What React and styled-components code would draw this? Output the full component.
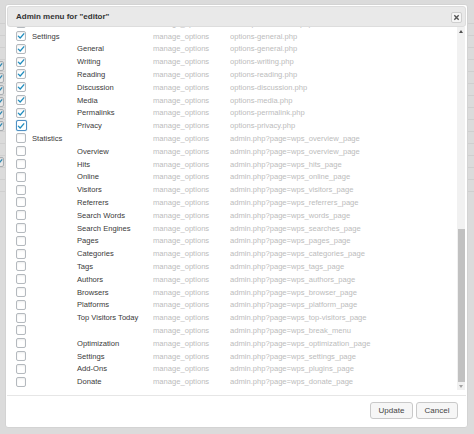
import React, { useLayoutEffect, useRef, useState } from 'react'
import styled, { createGlobalStyle, css } from 'styled-components'

const GlobalStyle = createGlobalStyle`
    html, body {
        margin: 0;
        padding: 0;
        height: 100%;
        background: #f1f1f1;
        font-family: "Liberation Sans", Arial, sans-serif;
        overflow: hidden;
    }
`

const Page = styled.div`
    position: relative;
    width: 474px;
    height: 434px;
    overflow: hidden;
    background: #f1f1f1;
`

const BackList = styled.div`
    display: flex;
    flex-direction: column;
    margin-left: -6px;
    padding-top: 12px;
`

const BackRow = styled.div`
    height: 11px;
    border-bottom: 1px solid #e2e2e2;
    display: flex;
    align-items: center;
`

const Overlay = styled.div`
    position: absolute;
    inset: 0;
    background: rgba(120, 120, 120, 0.18);
`

const Dialog = styled.div`
    position: absolute;
    top: 4px;
    left: 5px;
    width: 463px;
    height: 424px;
    box-sizing: border-box;
    border: 1px solid #d3d3d3;
    border-radius: 3px;
    padding: 1px;
    background: #fff;
    display: flex;
    flex-direction: column;
`

const TitleBar = styled.div`
    height: 21px;
    box-sizing: border-box;
    background: #e9e9e9;
    border: 1px solid #dddddd;
    border-radius: 3px;
    display: flex;
    align-items: center;
    justify-content: space-between;
    padding: 0 3px 0 8px;
`

const Title = styled.span`
    font-size: 8px;
    font-weight: bold;
    color: #333;
`

const CloseButton = styled.button`
    width: 11px;
    height: 11px;
    padding: 0;
    margin-top: 1px;
    box-sizing: border-box;
    border: 1px solid #cfcfcf;
    border-radius: 2px;
    background: #f6f6f6;
    display: flex;
    align-items: center;
    justify-content: center;
`

const Body = styled.div`
    height: 363px;
    margin: 0 1px;
    display: flex;
`

const List = styled.div`
    flex: 1;
    overflow: hidden;
    padding: 1px 0 2px;
    box-sizing: border-box;
`

const ScrollBar = styled.div`
    width: 8px;
    background: #f1f1f1;
    display: flex;
    flex-direction: column;
`

const ScrollArrow = styled.div`
    height: 8px;
    display: flex;
    align-items: center;
    justify-content: center;
`

const ScrollTrack = styled.div`
    flex: 1;
    display: flex;
    flex-direction: column;
`

const ScrollThumb = styled.div`
    margin-left: 1px;
    width: 7px;
    background: #c1c1c1;
`

const Row = styled.div`
    height: 12.8px;
    display: grid;
    grid-template-columns: 16px 121px 77px 1fr;
    align-items: center;
    padding-left: 8px;
    font-size: 7.6px;
    white-space: nowrap;
`

const Label = styled.span`
    color: #3a3a3a;
    padding-left: ${p => (p.$level === 2 ? 45 : 0)}px;
`

const Muted = styled.span`
    color: #bcbcbc;
    overflow: hidden;
`

const Box = styled.span`
    width: 10px;
    height: 10px;
    box-sizing: border-box;
    border: 1px solid #b4b9be;
    border-radius: 2px;
    background: #fff;
    box-shadow: inset 0 1px 2px rgba(0, 0, 0, 0.08);
    display: flex;
    align-items: center;
    justify-content: center;

    ${p => p.$focus && css`
        width: 11px;
        height: 11px;
        margin-left: -0.5px;
        border-color: #4f8fc4;
        box-shadow: 0 0 1px rgba(30, 140, 190, 0.8);
    `}
`

const Footer = styled.div`
    margin-top: 5px;
    border-top: 1px solid #e6e6e6;
    padding: 6px 8px 0 0;
    display: flex;
    justify-content: flex-end;
    gap: 3px;
`

const Button = styled.button`
    height: 17px;
    box-sizing: border-box;
    padding: 0 7px;
    border: 1px solid #c9c9c9;
    border-radius: 3px;
    background: #f6f6f6;
    color: #454545;
    font-family: "Liberation Sans", Arial, sans-serif;
    font-size: 8px;
    min-width: ${p => p.$min || 0}px;
`

const Check = ({ color = '#1e8cbe' }) => (
    <svg width="8" height="8" viewBox="0 0 8 8">
        <path d="M1.3 4.1 L3.2 6 L6.8 1.8" fill="none" stroke={color} strokeWidth="1.3" strokeLinecap="round" strokeLinejoin="round" />
    </svg>
)

const Checkbox = ({ checked, focus }) => (
    <Box $focus={focus}>{checked && <Check />}</Box>
)

const above = [
    ['Dashboard', 1, 'read', 'index.php'],
    ['Home', 2, 'read', 'index.php'],
    ['Updates', 2, 'update_core', 'update-core.php'],
    ['Posts', 1, 'edit_posts', 'edit.php'],
    ['All Posts', 2, 'edit_posts', 'edit.php'],
    ['Add New', 2, 'edit_posts', 'post-new.php'],
    ['Categories', 2, 'manage_categories', 'edit-tags.php?taxonomy=category'],
    ['Tags', 2, 'manage_categories', 'edit-tags.php?taxonomy=post_tag'],
    ['Media', 1, 'upload_files', 'upload.php'],
    ['Library', 2, 'upload_files', 'upload.php'],
    ['Add New', 2, 'upload_files', 'media-new.php'],
    ['Pages', 1, 'edit_pages', 'edit.php?post_type=page'],
    ['All Pages', 2, 'edit_pages', 'edit.php?post_type=page'],
    ['Add New', 2, 'edit_pages', 'post-new.php?post_type=page'],
    ['Comments', 1, 'edit_posts', 'edit-comments.php'],
    ['Appearance', 1, 'switch_themes', 'themes.php'],
    ['Themes', 2, 'switch_themes', 'themes.php'],
    ['Customize', 2, 'customize', 'customize.php'],
    ['Widgets', 2, 'edit_theme_options', 'widgets.php'],
    ['Menus', 2, 'edit_theme_options', 'nav-menus.php'],
    ['Theme Editor', 2, 'edit_themes', 'theme-editor.php'],
    ['Plugins', 1, 'activate_plugins', 'plugins.php'],
    ['Installed Plugins', 2, 'activate_plugins', 'plugins.php'],
    ['Add New', 2, 'install_plugins', 'plugin-install.php'],
    ['Plugin Editor', 2, 'edit_plugins', 'plugin-editor.php'],
    ['Users', 1, 'list_users', 'users.php'],
    ['All Users', 2, 'list_users', 'users.php'],
    ['Add New', 2, 'create_users', 'user-new.php'],
    ['Your Profile', 2, 'read', 'profile.php'],
    ['Tools', 1, 'edit_posts', 'tools.php'],
    ['Available Tools', 2, 'edit_posts', 'tools.php'],
    ['Import', 2, 'import', 'import.php'],
    ['Export', 2, 'export', 'export.php'],
    ['Site Health', 2, 'view_site_health_checks', 'site-health.php'],
    ['Export Personal Data', 2, 'export_others_personal_data', 'export-personal-data.php'],
    ['Erase Personal Data', 2, 'manage_options', 'erase-personal-data.php'],
].map(([label, level, cap, url]) => ({ label, level, cap, url, checked: true }))

const settings = [
    ['Settings', 1, 'options-general.php'],
    ['General', 2, 'options-general.php'],
    ['Writing', 2, 'options-writing.php'],
    ['Reading', 2, 'options-reading.php'],
    ['Discussion', 2, 'options-discussion.php'],
    ['Media', 2, 'options-media.php'],
    ['Permalinks', 2, 'options-permalink.php'],
    ['Privacy', 2, 'options-privacy.php'],
].map(([label, level, url]) => ({ label, level, cap: 'manage_options', url, checked: true, focus: label === 'Privacy' }))

const stats = [
    ['Statistics', 1, 'overview'],
    ['Overview', 2, 'overview'],
    ['Hits', 2, 'hits'],
    ['Online', 2, 'online'],
    ['Visitors', 2, 'visitors'],
    ['Referrers', 2, 'referrers'],
    ['Search Words', 2, 'words'],
    ['Search Engines', 2, 'searches'],
    ['Pages', 2, 'pages'],
    ['Categories', 2, 'categories'],
    ['Tags', 2, 'tags'],
    ['Authors', 2, 'authors'],
    ['Browsers', 2, 'browser'],
    ['Platforms', 2, 'platform'],
    ['Top Visitors Today', 2, 'top-visitors'],
    ['', 2, 'break_menu'],
    ['Optimization', 2, 'optimization'],
    ['Settings', 2, 'settings'],
    ['Add-Ons', 2, 'plugins'],
    ['Donate', 2, 'donate'],
].map(([label, level, page]) => ({
    label,
    level,
    cap: 'manage_options',
    url: page === 'break_menu' ? 'admin.php?page=wps_break_menu' : `admin.php?page=wps_${page}_page`,
    checked: false,
}))

const items = [...above, ...settings, ...stats]

const backRows = [false, false, false, false, true, true, true, true, true, true, false, false, true, false, false]

export default function App() {
    const list = useRef(null)
    const track = useRef(null)
    const [thumb, setThumb] = useState({ top: 0, height: 0 })

    useLayoutEffect(() => {
        const el = list.current
        if (!el) return
        el.scrollTop = el.scrollHeight
        const trackH = track.current.clientHeight
        const height = Math.round(trackH * (el.clientHeight / el.scrollHeight))
        const max = el.scrollHeight - el.clientHeight
        const top = max > 0 ? Math.round((trackH - height) * (el.scrollTop / max)) : 0
        setThumb({ top, height })
    }, [])

    return (
        <>
            <GlobalStyle />
            <Page>
                <BackList>
                    {backRows.map((on, i) => (
                        <BackRow key={i}>{on && <Box><Check /></Box>}</BackRow>
                    ))}
                </BackList>
                <Overlay />
                <Dialog>
                    <TitleBar>
                        <Title>Admin menu for "editor"</Title>
                        <CloseButton aria-label="Close">
                            <svg width="7" height="7" viewBox="0 0 7 7">
                                <path d="M1.3 1.3 L5.7 5.7 M5.7 1.3 L1.3 5.7" stroke="#555" strokeWidth="1.4" />
                            </svg>
                        </CloseButton>
                    </TitleBar>
                    <Body>
                        <List ref={list}>
                            {items.map((it, i) => (
                                <Row key={i}>
                                    <Checkbox checked={it.checked} focus={it.focus} />
                                    <Label $level={it.level}>{it.label}</Label>
                                    <Muted>{it.cap}</Muted>
                                    <Muted>{it.url}</Muted>
                                </Row>
                            ))}
                        </List>
                        <ScrollBar>
                            <ScrollArrow>
                                <svg width="4" height="3" viewBox="0 0 4 3"><polygon points="2,0 4,3 0,3" fill="#505050" /></svg>
                            </ScrollArrow>
                            <ScrollTrack ref={track}>
                                <ScrollThumb style={{ marginTop: thumb.top, height: thumb.height }} />
                            </ScrollTrack>
                            <ScrollArrow>
                                <svg width="4" height="3" viewBox="0 0 4 3"><polygon points="0,0 4,0 2,3" fill="#a3a3a3" /></svg>
                            </ScrollArrow>
                        </ScrollBar>
                    </Body>
                    <Footer>
                        <Button $min={43}>Update</Button>
                        <Button $min={42}>Cancel</Button>
                    </Footer>
                </Dialog>
            </Page>
        </>
    )
}
